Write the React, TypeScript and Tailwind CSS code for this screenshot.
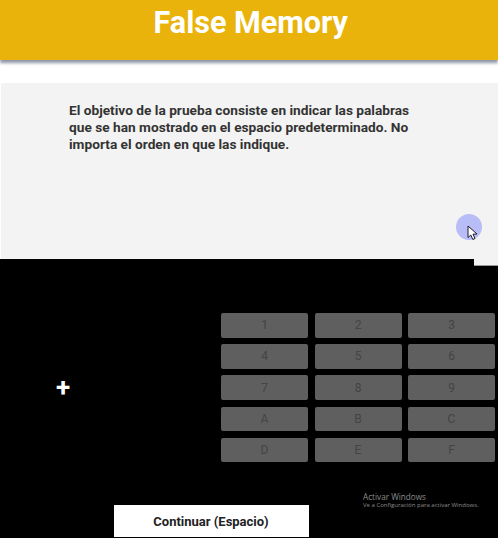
export default function App() {
  const keys = ["1", "2", "3", "4", "5", "6", "7", "8", "9", "A", "B", "C", "D", "E", "F"];
  return (
    <div className="relative flex h-[538px] w-[498px] flex-col overflow-hidden bg-white font-['Roboto',sans-serif]">
      <header className="flex h-[60px] items-start justify-center bg-[#e9b30b] pl-[3px] shadow-[0_3px_3px_rgba(80,90,115,0.65)]">
        <h1 className="scale-x-[0.955] text-[32px] leading-[44px] font-bold text-white">False Memory</h1>
      </header>
      <section className="mt-[23px] ml-px h-[176px] bg-[#f3f3f3] pt-[19px] pl-[68px]">
        <p className="w-[350px] text-[13.7px] leading-[17px] font-bold text-[#333333]">
          El objetivo de la prueba consiste en indicar las palabras que se han mostrado en el espacio predeterminado. No importa el orden en que las indique.
        </p>
      </section>
      <main className="flex flex-1 flex-col bg-black">
        <div className="flex justify-end">
          <div className="h-[7px] w-[24px] border-b border-[#9a9a9a] bg-[#f3f3f3]"></div>
        </div>
        <div className="mt-[47px] flex">
          <div className="flex w-[221px] items-center pb-[1px] pl-[56px]">
            <span className="text-[26px] leading-[26px] font-bold text-white">+</span>
          </div>
          <div className="grid w-[274px] grid-cols-3 gap-x-[6.5px] gap-y-[6.6px]">
            {keys.map((k) => (
              <div key={k} className="flex h-[24.6px] items-center justify-center rounded-[2px] bg-[#5f5f5f] text-[12px] text-[#444444]">
                {k}
              </div>
            ))}
          </div>
        </div>
        <div className="mt-[43px] ml-[114px] flex h-[32px] w-[195px] items-center justify-center bg-white pr-[1px] text-[13px] font-bold text-[#222222]">
          Continuar (Espacio)
        </div>
      </main>
      <div className="absolute top-[214px] left-[456px] h-[26px] w-[26px] rounded-full bg-[#b9bdf7]"></div>
      <svg className="absolute top-[225px] left-[467px]" width="12" height="16" viewBox="0 0 12 16">
        <path d="M1 1 L1 12.5 L3.8 10 L5.8 14.5 L8 13.5 L6 9.2 L10 9 Z" fill="#ffffff" stroke="#1a1a2a" strokeWidth="1" strokeLinejoin="round" />
      </svg>
      <div className="absolute top-[491px] left-[363px] font-['Open_Sans',sans-serif] text-[#8c8c8c]">
        <div className="text-[8.2px] leading-[11px]">Activar Windows</div>
        <div className="text-[6px] leading-[7px]">Ve a Configuración para activar Windows.</div>
      </div>
    </div>
  );
}
